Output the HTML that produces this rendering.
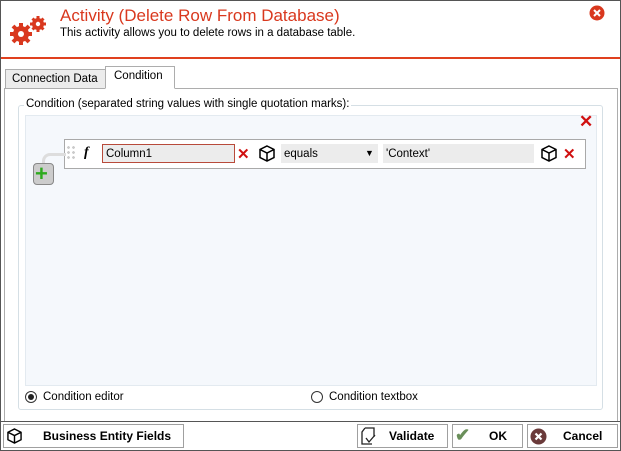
<!DOCTYPE html>
<html><head><style>
*{box-sizing:border-box;margin:0;padding:0}
body{width:621px;height:451px;overflow:hidden;background:#fff;font-family:"Liberation Sans",sans-serif;font-size:12px;color:#000;position:relative}
.a{position:absolute}
.btn{position:absolute;top:424px;height:24px;border:1px solid #a0a0a0;background:#fff;font-weight:bold;font-size:12px;line-height:22px}
</style></head><body>
<div class="a" style="left:0;top:0;width:621px;height:451px;border:1px solid #555"></div>
<svg class="a" style="left:8px;top:15px" width="42" height="32" viewBox="0 0 42 32">
<g fill="#d9381e">
<circle cx="13" cy="19" r="8"/><circle cx="30" cy="9" r="6"/>
<g stroke="#d9381e" stroke-width="4"><path d="M13 8v22M2 19h22M5 11l16 16M21 11L5 27"/><path d="M30 1v16M22 9h16M24.5 3.5l11 11M35.5 3.5l-11 11" stroke-width="3"/></g>
</g>
<circle cx="13" cy="19" r="3" fill="#fff"/><circle cx="30" cy="9" r="2.2" fill="#fff"/>
</svg>
<div class="a" style="left:60px;top:6px;font-size:17px;color:#d9381e">Activity (Delete Row From Database)</div>
<div class="a" style="left:60px;top:27px;font-size:11.5px">This activity allows you to delete rows in a database table.</div>
<svg class="a" style="left:589px;top:5px" width="16" height="16"><circle cx="8" cy="8" r="7.5" fill="#d9381e"/><path d="M5 5l6 6M11 5l-6 6" stroke="#fff" stroke-width="2"/></svg>
<div class="a" style="left:1px;top:57px;width:619px;height:2px;background:#e0401e"></div>
<div class="a" style="left:4px;top:88px;width:614px;height:333px;border:1px solid #adadad;border-bottom:none"></div>
<div class="a" style="left:5px;top:69px;width:101px;height:20px;border:1px solid #adadad;background:#ececec;font-size:11.5px;padding:3px 0 0 6px">Connection Data</div>
<div class="a" style="left:105px;top:66px;width:70px;height:23px;border:1px solid #adadad;border-bottom:1px solid #fff;background:#fff;font-size:11.5px;padding:3px 0 0 8px">Condition</div>
<div class="a" style="left:18px;top:105px;width:585px;height:305px;border:1px solid #d5dfe5;border-radius:3px"></div>
<div class="a" style="left:24px;top:98px;background:#fff;padding:0 2px;font-size:11.5px">Condition (separated string values with single quotation marks):</div>
<div class="a" style="left:25px;top:115px;width:572px;height:271px;background:#f5f8fc;border:1px solid #e3eaf0"></div>
<div class="a" style="left:579px;top:112px;color:#d01010;font-weight:bold;font-size:17px">✕</div>
<div class="a" style="left:64px;top:139px;width:522px;height:30px;border:1px solid #a9a9a9;background:#fff"></div>
<div class="a" style="left:42px;top:153px;width:24px;height:12px;border-left:3px solid #ddd;border-top:3px solid #ddd;border-top-left-radius:8px"></div>
<div class="a" style="left:33px;top:163px;width:21px;height:22px;border:1px solid #888;border-radius:4px;background:#ccc"></div>
<div class="a" style="left:35px;top:161px;color:#2eaa1e;font-weight:bold;font-size:22px">+</div>
<div class="a" style="left:66px;top:145px;width:10px;height:16px;background:radial-gradient(circle,#ccc 1.3px,transparent 1.5px) 0 0/5px 5px"></div>
<div class="a" style="left:84px;top:145px;font-style:italic;font-weight:bold;font-family:'Liberation Serif',serif;font-size:14px">f</div>
<div class="a" style="left:102px;top:144px;width:133px;height:19px;border:1px solid #b84a3a;background:#ececec;font-size:11.5px;padding:3px 0 0 3px">Column1</div>
<div class="a" style="left:237px;top:145px;color:#d01010;font-weight:bold;font-size:15px">✕</div>
<svg class="a" style="left:259px;top:145px" width="16" height="17" viewBox="0 0 16 17" fill="none" stroke="#000" stroke-width="1.5"><path d="M8 1L15 4.5V12.5L8 16L1 12.5V4.5Z M1 4.5L8 8L15 4.5M8 8V16"/></svg>
<div class="a" style="left:281px;top:144px;width:97px;height:19px;background:#ececec;font-size:11.5px;padding:4px 0 0 3px">equals<span style="position:absolute;left:84px;top:4px;font-size:9px">▼</span></div>
<div class="a" style="left:383px;top:144px;width:151px;height:19px;background:#ececec;font-size:11.5px;padding:4px 0 0 3px">'Context'</div>
<svg class="a" style="left:541px;top:145px" width="16" height="17" viewBox="0 0 16 17" fill="none" stroke="#000" stroke-width="1.5"><path d="M8 1L15 4.5V12.5L8 16L1 12.5V4.5Z M1 4.5L8 8L15 4.5M8 8V16"/></svg>
<div class="a" style="left:563px;top:145px;color:#d01010;font-weight:bold;font-size:15px">✕</div>
<div class="a" style="left:25px;top:391px;width:12px;height:12px;border:1px solid #333;border-radius:50%"><div style="margin:2px;width:6px;height:6px;border-radius:50%;background:#222"></div></div>
<div class="a" style="left:43px;top:391px;font-size:11.5px">Condition editor</div>
<div class="a" style="left:311px;top:391px;width:12px;height:12px;border:1px solid #333;border-radius:50%"></div>
<div class="a" style="left:329px;top:391px;font-size:11.5px">Condition textbox</div>
<div class="a" style="left:1px;top:421px;width:619px;height:1px;background:#555"></div>
<div class="btn" style="left:3px;width:181px;padding-left:39px">Business Entity Fields</div>
<svg class="a" style="left:7px;top:428px" width="15" height="16" viewBox="0 0 16 17" fill="none" stroke="#000" stroke-width="1.5"><path d="M8 1L15 4.5V12.5L8 16L1 12.5V4.5Z M1 4.5L8 8L15 4.5M8 8V16"/></svg>
<div class="btn" style="left:357px;width:91px;padding-left:31px">Validate</div>
<svg class="a" style="left:361px;top:427px" width="16" height="18" fill="none" stroke="#222" stroke-width="1.3"><path d="M4 1h9v9M4 1L1 5v12h10M5 11l3 4 6-7"/></svg>
<div class="btn" style="left:452px;width:71px;padding-left:36px">OK</div>
<div class="a" style="left:455px;top:425px;color:#6a8f5a;font-size:18px;font-weight:bold">✔</div>
<div class="btn" style="left:527px;width:91px;padding-left:35px">Cancel</div>
<svg class="a" style="left:530px;top:428px" width="17" height="17"><circle cx="8.5" cy="8.5" r="8" fill="#6a3a3a"/><path d="M5.5 5.5l6 6M11.5 5.5l-6 6" stroke="#fff" stroke-width="2.2"/></svg>
</body></html>
